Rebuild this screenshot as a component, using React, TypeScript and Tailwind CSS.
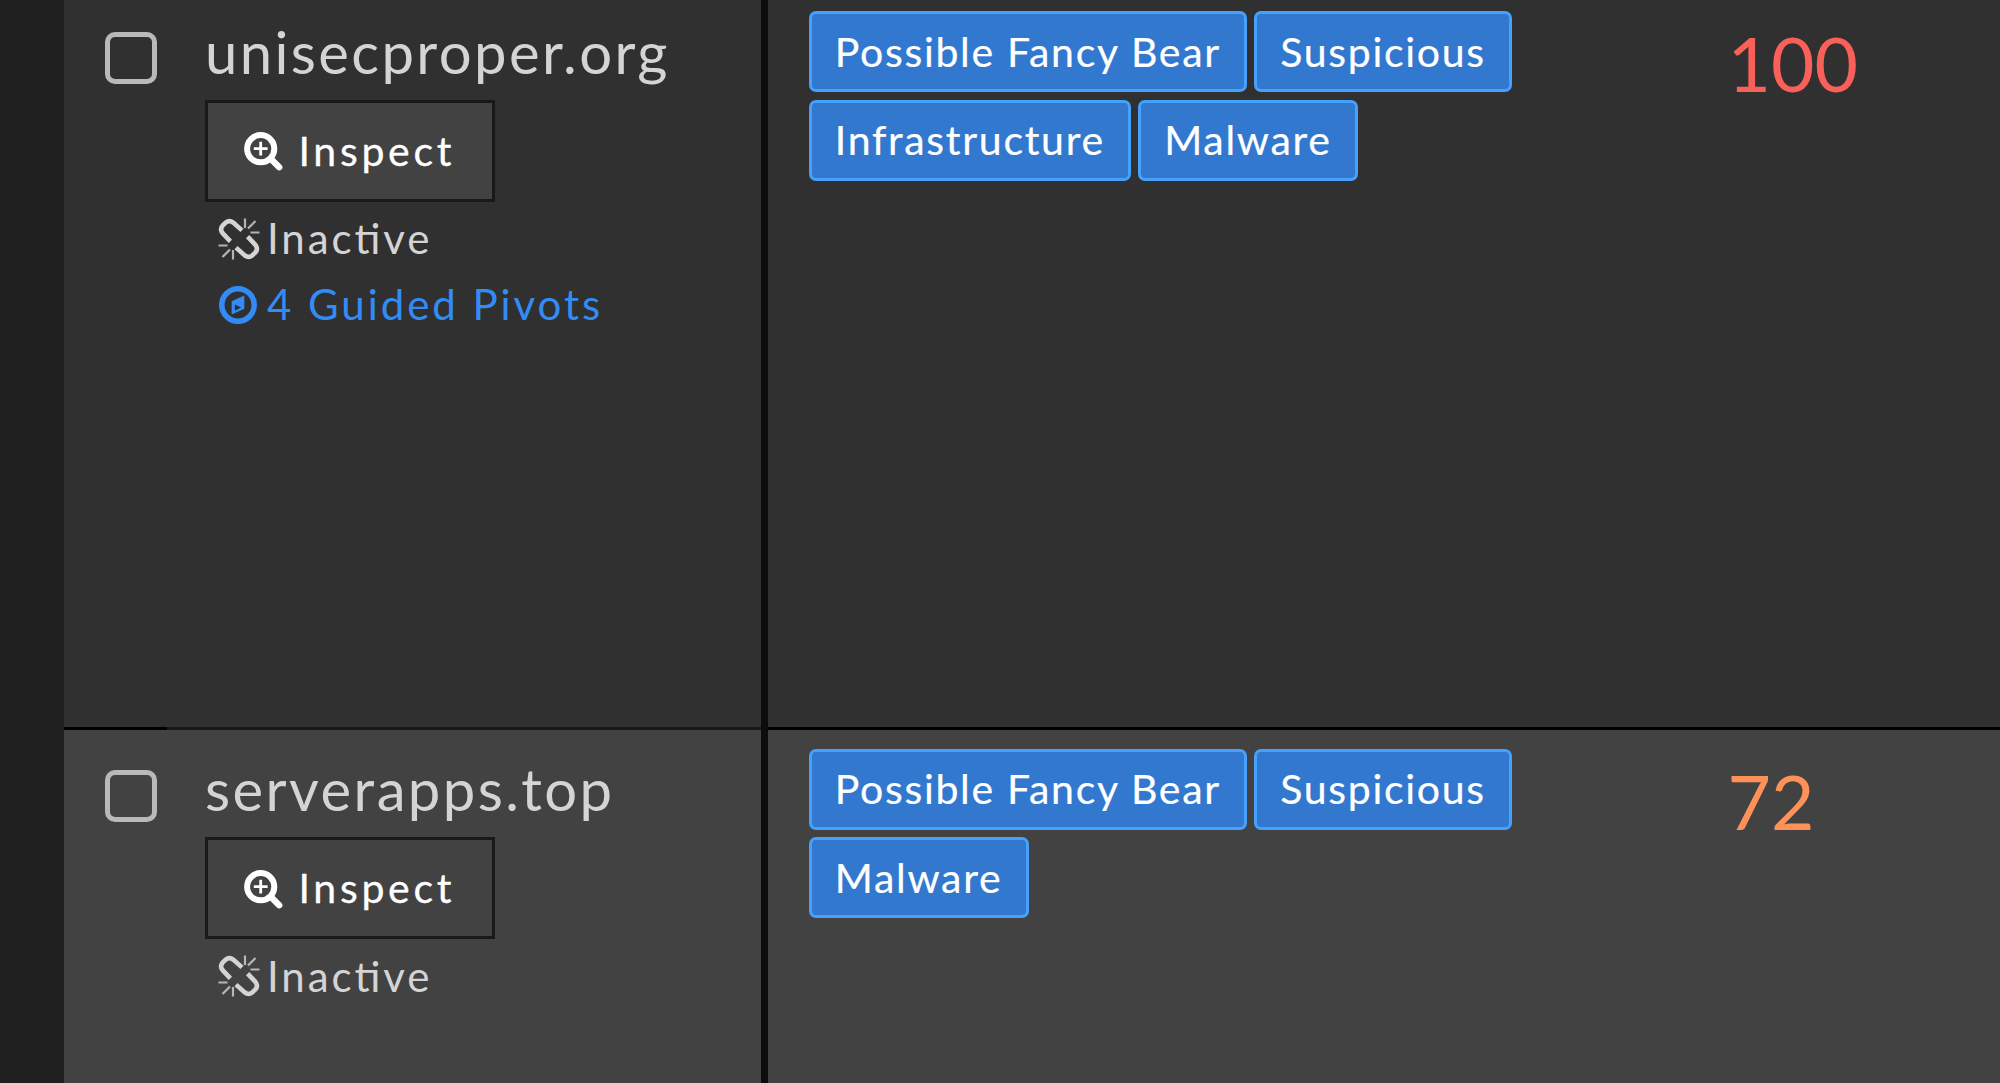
type Domain = {
    name: string;
    tags: string[];
    score: number;
    scoreColor: string;
    pivots?: number;
};

const domains: Domain[] = [
    {
        name: 'unisecproper.org',
        tags: ['Possible Fancy Bear', 'Suspicious', 'Infrastructure', 'Malware'],
        score: 100,
        scoreColor: 'text-[#f9605a]',
        pivots: 4,
    },
    {
        name: 'serverapps.top',
        tags: ['Possible Fancy Bear', 'Suspicious', 'Malware'],
        score: 72,
        scoreColor: 'text-[#fd9259]',
    },
];

function ZoomIcon() {
    return (
        <svg viewBox="0 0 39 39" className="mt-[2px] w-[39px] h-[39px] shrink-0" fill="none" stroke="currentColor">
            <circle cx="16.7" cy="16.7" r="13.6" strokeWidth="6" />
            <path d="M27.5 27.5L35.2 35.2" strokeWidth="6.4" strokeLinecap="round" />
            <path d="M9.8 16.7h13.8M16.7 9.8v13.8" strokeWidth="2.8" />
        </svg>
    );
}

function BrokenLinkIcon() {
    return (
        <svg viewBox="0 0 42 42" className="w-[42px] h-[42px] shrink-0" fill="none" stroke="currentColor">
            <path d="M12.4 23.4L4.6 15.2Q1.4 11 4.8 7.4L7.8 4.6Q11.4 1.6 15.2 4.6L24 12.4" strokeWidth="4.6" />
            <path d="M29.6 18.6L37.4 26.8Q40.6 31 37.2 34.6L34.2 37.4Q30.6 40.4 26.8 37.4L18 29.6" strokeWidth="4.6" />
            <path
                d="M27 .5v9.5M37.5 3L30 10.5M32.5 14.5h9M.5 27.5h9M4.5 39L12 31.5M15 32v9.5"
                strokeWidth="2.2"
                opacity=".8"
            />
        </svg>
    );
}

function CompassIcon() {
    return (
        <svg viewBox="0 0 1536 1536" className="w-[38px] h-[38px] shrink-0" fill="currentColor">
            <circle cx="768" cy="768" r="656" fill="none" stroke="currentColor" strokeWidth="224" />
            <path fillRule="evenodd" d="M1024 381v542l-512 232V613zM640 1000l256-128-256-128z" />
        </svg>
    );
}

function DomainRow({ domain, shaded }: { domain: Domain; shaded: boolean }) {
    return (
        <div className={`flex h-[737.5px] shrink-0 ${shaded ? 'bg-[#424242]' : 'bg-[#303030]'}`}>
            <div className="w-[103px] shrink-0 border-b-3 border-black pl-[41px] pt-[40.4px]">
                <div className="size-[52px] rounded-[10px] border-5 border-[#b9b9b9]" />
            </div>

            <div className="w-[594px] shrink-0 border-b-3 border-[#191919] pl-[38px] pt-[19.5px] text-[#d4d4d4]">
                <div className="text-[58px] leading-[80px] tracking-[2.4px] whitespace-nowrap">{domain.name}</div>
                <button className="mt-[8px] flex h-[102px] w-[290px] items-center gap-[15.5px] border-3 border-[#191919] bg-[#424242] pl-[36px] text-[41px] tracking-[3.7px] text-white [-webkit-text-stroke:0.3px_currentColor]">
                    <ZoomIcon />
                    <span>Inspect</span>
                </button>
                <div className="mt-[4px] ml-[13px] flex h-[66px] items-center gap-[7px] text-[42px] tracking-[2.9px] [font-feature-settings:'liga'_1]">
                    <BrokenLinkIcon />
                    <span>Inactive</span>
                </div>
                {domain.pivots && (
                    <div className="ml-[14px] flex h-[66px] items-center gap-[10px] text-[42px] tracking-[2.95px] text-[#338cf5]">
                        <CompassIcon />
                        <span className="whitespace-nowrap">{domain.pivots} Guided Pivots</span>
                    </div>
                )}
            </div>

            <div className="w-[7px] shrink-0 bg-[#0c0c0c]" />

            <div className="flex grow border-b-3 border-black pl-[41px] pt-[19px]">
                <div className="flex w-[780px] flex-wrap content-start gap-x-[7px] gap-y-[7.5px]">
                    {domain.tags.map((tag) => (
                        <span
                            key={tag}
                            className="flex h-[81px] items-center rounded-[7px] border-3 border-[#45a1fb] bg-[#3278cf] pr-[23.6px] pl-[22.8px] text-[41px] tracking-[1.7px] whitespace-nowrap text-white [-webkit-text-stroke:0.2px_currentColor]"
                        >
                            {tag}
                        </span>
                    ))}
                </div>
                <div className={`pl-[138.5px] text-[75px] leading-[105.5px] ${domain.scoreColor}`}>{domain.score}</div>
            </div>
        </div>
    );
}

export default function App() {
    return (
        <div className="flex h-[1083px] w-[2000px] overflow-hidden bg-[#202020] pl-16 font-['Lato',sans-serif]">
            <div className="-mt-2 flex grow flex-col">
                {domains.map((domain, i) => (
                    <DomainRow key={domain.name} domain={domain} shaded={i % 2 === 1} />
                ))}
            </div>
        </div>
    );
}
